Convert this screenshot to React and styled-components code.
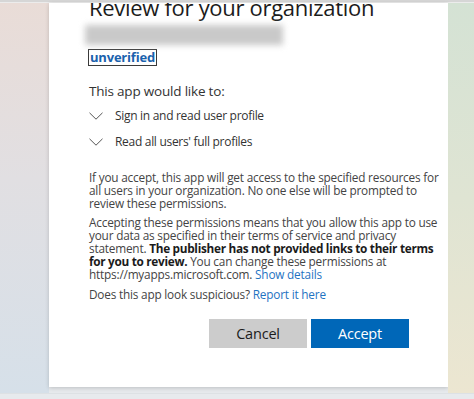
import React from "react";
import styled, { createGlobalStyle } from "styled-components";

const GlobalStyle = createGlobalStyle`
  html, body {
    margin: 0;
    padding: 0;
    width: 474px;
    height: 399px;
    overflow: hidden;
    background: #e6e9ec;
  }
  body {
    font-family: "Open Sans", "Noto Sans", Arial, sans-serif;
  }
`;

const Screen = styled.div`
  width: 474px;
  height: 399px;
  display: flex;
  flex-direction: column;
`;

const TopStrip = styled.div`
  height: 3px;
  background: #d6d6d6;
  border-bottom: 1px solid #ececec;
  box-sizing: border-box;
`;

const Stage = styled.div`
  display: flex;
  height: 390px;
`;

const Side = styled.div`
  width: ${(p) => p.$width}px;
  background: ${(p) =>
    p.$tone === "left"
      ? "linear-gradient(to bottom, #e9dcd7 0%, #e1dfe2 45%, #d6e0e9 100%)"
      : "linear-gradient(to bottom, #d4e2d4 0%, #dfe4d3 50%, #ece6d1 100%)"};
`;

const Card = styled.div`
  width: 399px;
  height: 384px;
  background: #ffffff;
  box-shadow: 0 1px 4px rgba(0, 0, 0, 0.18);
  overflow: hidden;
  padding: 0 39px 0 40px;
  box-sizing: border-box;
  color: #1b1b1b;
`;

const Title = styled.h1`
  margin: -11px 0 0;
  font-size: 22px;
  line-height: 30px;
  font-weight: 400;
  letter-spacing: -0.3px;
  color: #1b1b1b;
  white-space: nowrap;
`;

const BlurredName = styled.div`
  margin: 3px 0 0 -4px;
  width: 198px;
  height: 20px;
  background: #c9c9c9;
  filter: blur(3px);
`;

const Unverified = styled.a`
  display: inline-block;
  margin: 1px 0 0 -1px;
  padding: 0 1px 1px 1px;
  border: 1px solid #3a3a3a;
  font-size: 13px;
  line-height: 14px;
  font-weight: 700;
  letter-spacing: -0.2px;
  color: #1a62ad;
  text-decoration: none;
`;

const Lead = styled.p`
  margin: 14px 0 0;
  font-size: 13.5px;
  line-height: 20px;
  letter-spacing: -0.2px;
  color: #333;
`;

const PermList = styled.ul`
  list-style: none;
  margin: 5px 0 0;
  padding: 0;
  display: flex;
  flex-direction: column;
  gap: 6px;
`;

const Perm = styled.li`
  display: flex;
  align-items: center;
  gap: 12px;
  font-size: 12px;
  line-height: 20px;
  letter-spacing: -0.3px;
  color: #333;
`;

const Chevron = styled.svg`
  width: 14px;
  height: 8px;
  flex: none;
`;

const Body = styled.p`
  margin: ${(p) => p.$top}px 0 0;
  font-size: 11.8px;
  line-height: 12.8px;
  color: #444;
  letter-spacing: -0.2px;
  white-space: nowrap;

  b {
    color: #1b1b1b;
    font-weight: 700;
    letter-spacing: -0.3px;
  }
`;

const Link = styled.a`
  color: #1f73c2;
  text-decoration: none;
`;

const Actions = styled.div`
  display: flex;
  justify-content: flex-end;
  gap: 4px;
  margin-top: 18px;
`;

const Button = styled.button`
  width: 98px;
  height: 29px;
  border: none;
  font-family: inherit;
  font-size: 14.5px;
  letter-spacing: -0.2px;
  background: ${(p) => (p.$primary ? "#0067b8" : "#cccccc")};
  color: ${(p) => (p.$primary ? "#ffffff" : "#1b1b1b")};
`;

const BottomStrip = styled.div`
  flex: 1;
  background: #e7eaed;
  border-top: 1px solid #dde1e4;
`;

function ChevronIcon() {
  return (
    <Chevron viewBox="0 0 14 8" fill="none">
      <path d="M0.5 0.8 L7 7.2 L13.5 0.8" stroke="#555" strokeWidth="1" />
    </Chevron>
  );
}

export default function App() {
  return (
    <Screen>
      <GlobalStyle />
      <TopStrip />
      <Stage>
        <Side $tone="left" $width={49} />
        <Card>
          <Title>Review for your organization</Title>
          <BlurredName />
          <Unverified href="#">unverified</Unverified>
          <Lead>This app would like to:</Lead>
          <PermList>
            <Perm>
              <ChevronIcon />
              Sign in and read user profile
            </Perm>
            <Perm>
              <ChevronIcon />
              Read all users' full profiles
            </Perm>
          </PermList>
          <Body $top={19}>
            If you accept, this app will get access to the specified resources for
            <br />
            all users in your organization. No one else will be prompted to
            <br />
            review these permissions.
          </Body>
          <Body $top={7}>
            Accepting these permissions means that you allow this app to use
            <br />
            your data as specified in their terms of service and privacy
            <br />
            statement. <b>The publisher has not provided links to their terms</b>
            <br />
            <b>for you to review.</b> You can change these permissions at
            <br />
            https://myapps.microsoft.com. <Link href="#">Show details</Link>
          </Body>
          <Body $top={8}>
            Does this app look suspicious? <Link href="#">Report it here</Link>
          </Body>
          <Actions>
            <Button>Cancel</Button>
            <Button $primary>Accept</Button>
          </Actions>
        </Card>
        <Side $tone="right" $width={26} />
      </Stage>
      <BottomStrip />
    </Screen>
  );
}
